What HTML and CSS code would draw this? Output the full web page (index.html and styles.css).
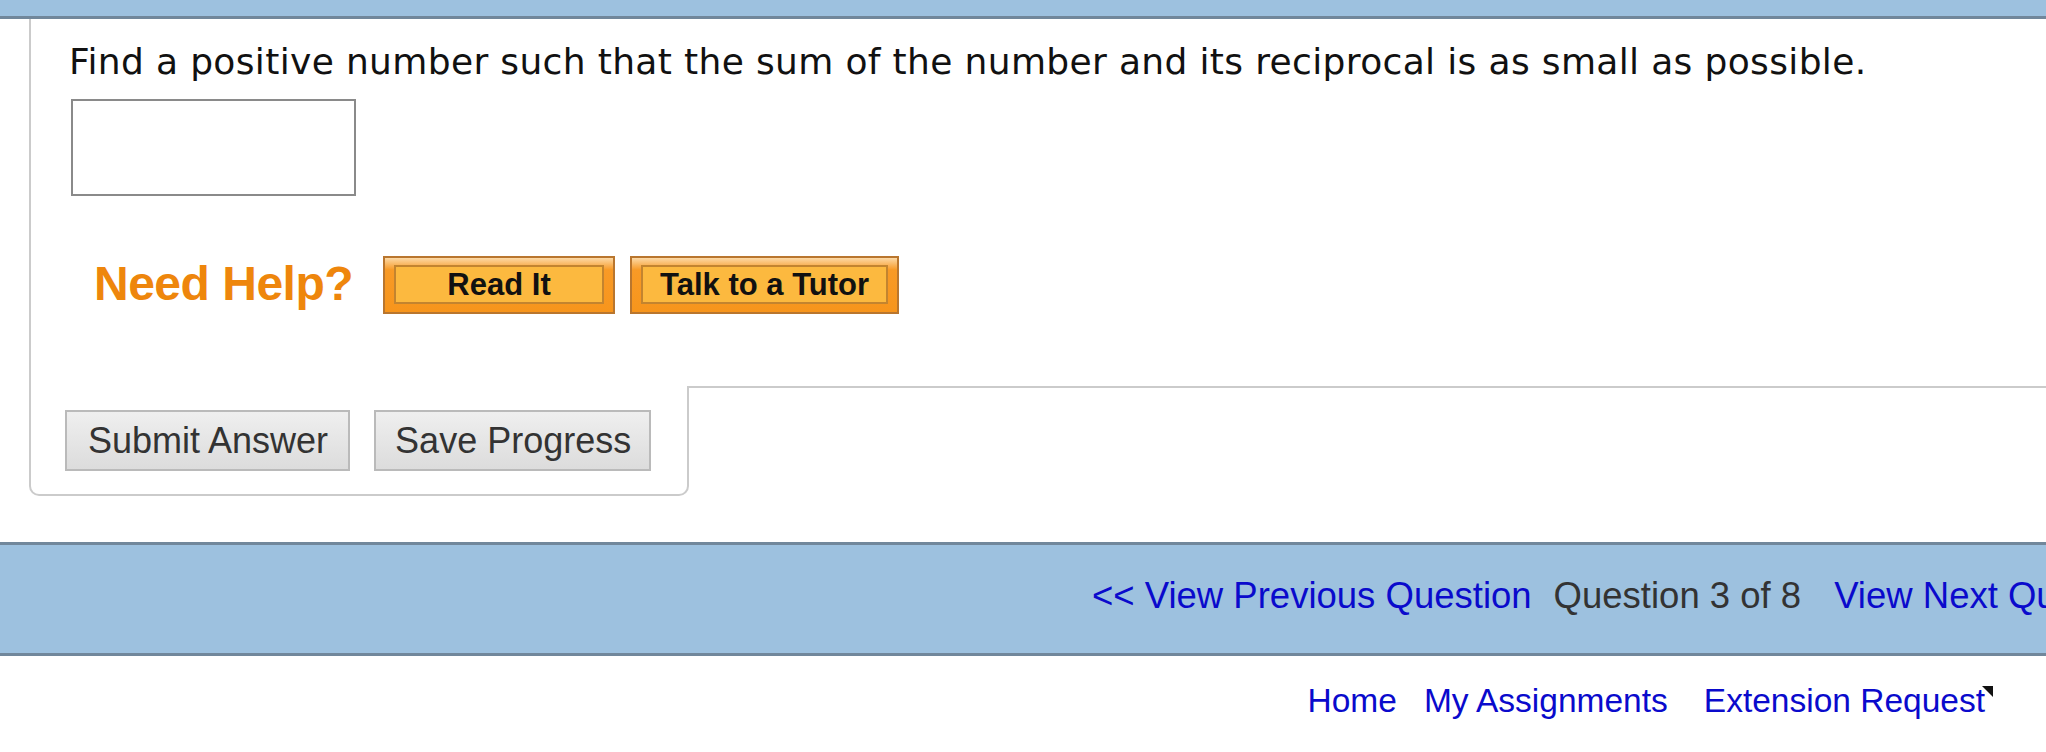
FILE: index.html
```html
<!DOCTYPE html>
<html>
<head>
<meta charset="utf-8">
<title>Question 3 of 8</title>
<link rel="stylesheet" href="styles.css">
</head>
<body>
<div class="topbar"></div>
<div class="main">
  <div class="qbox">
    <p class="qtext">Find a positive number such that the sum of the number and its reciprocal is as small as possible.</p>
    <input class="answer" type="text" aria-label="answer">
    <div class="help-row">
      <span class="need-help">Need Help?</span>
      <button class="help-btn read"><span class="help-inner">Read It</span></button>
      <button class="help-btn tutor"><span class="help-inner">Talk to a Tutor</span></button>
    </div>
  </div>
  <div class="tab">
    <button class="gray-btn">Submit Answer</button>
    <button class="gray-btn save">Save Progress</button>
  </div>
</div>
<div class="navbar">
  <div class="nav-inner">
    <a class="nav-link" href="#">&lt;&lt; View Previous Question</a>
    <span class="nav-count">Question 3 of 8</span>
    <a class="nav-link next" href="#">View Next Question &gt;&gt;</a>
  </div>
</div>
<div class="footer">
  <a class="foot-link" href="#">Home</a>
  <a class="foot-link mid" href="#">My Assignments</a>
  <a class="foot-link last" href="#">Extension Request<svg class="ext-icon" width="11" height="11" viewBox="0 0 11 11"><polygon points="0,0 11,0 11,11" fill="#111"/></svg></a>
</div>
</body>
</html>
```

FILE: styles.css
```css
html, body {
  margin: 0;
  padding: 0;
  background: #fff;
}
body {
  overflow: hidden;
  width: 2046px;
  height: 752px;
  font-family: "Liberation Sans", Arial, sans-serif;
}
.topbar {
  height: 16px;
  background: #9dc1df;
  border-bottom: 3px solid #71879b;
}
.main {
  padding-left: 29px;
}
.qbox {
  border-left: 2px solid #cbcbcb;
  border-bottom: 2px solid #cbcbcb;
  padding: 21px 0 72px 38px;
}
.qtext {
  margin: 0;
  font-family: "DejaVu Sans", Verdana, sans-serif;
  font-size: 36px;
  letter-spacing: 0.35px;
  line-height: 44px;
  color: #111;
  white-space: nowrap;
}
.answer {
  display: block;
  box-sizing: border-box;
  width: 285px;
  height: 97px;
  margin: 15px 0 0 2px;
  border: 2px solid #8a8a8a;
  background: #fff;
  padding: 0;
}
.help-row {
  display: flex;
  align-items: center;
  margin-top: 60px;
  padding-left: 25px;
}
.need-help {
  font-family: "Liberation Sans", Arial, sans-serif;
  font-weight: bold;
  font-size: 48px;
  letter-spacing: -0.5px;
  color: #ee860c;
  margin-right: 30px;
  position: relative;
  top: -2px;
}
.help-btn {
  box-sizing: border-box;
  height: 58px;
  margin: 0 15px 0 0;
  padding: 7px 9px 8px;
  border: 2px solid #b9762e;
  background: linear-gradient(#fcd9a6 0, #f89a26 22%, #f7951c 100%);
  display: flex;
  cursor: pointer;
}
.help-btn.read { width: 232px; }
.help-btn.tutor { width: 269px; }
.help-inner {
  flex: 1;
  display: flex;
  align-items: center;
  justify-content: center;
  border: 2px solid #c3842f;
  background: #fcb93f;
  font-family: "Liberation Sans", Arial, sans-serif;
  font-weight: bold;
  font-size: 31px;
  color: #111;
}
.tab {
  box-sizing: border-box;
  width: 660px;
  margin-top: -2px;
  background: #fff;
  border: 2px solid #cbcbcb;
  border-top: none;
  border-radius: 0 0 10px 10px;
  padding: 24px 0 23px 34px;
  display: flex;
  gap: 24px;
}
.gray-btn {
  box-sizing: border-box;
  height: 61px;
  padding: 0 20px 0 21px;
  border: 2px solid #bababa;
  background: linear-gradient(#efefef, #dcdcdc);
  font-family: "Liberation Sans", Arial, sans-serif;
  font-size: 36px;
  color: #333;
  cursor: pointer;
}
.gray-btn.save {
  padding: 0 18px 0 19px;
}
.navbar {
  margin-top: 46px;
  height: 108px;
  background: #9dc1df;
  border-top: 3px solid #71879b;
  border-bottom: 3px solid #71879b;
  overflow: hidden;
}
.nav-inner {
  display: flex;
  white-space: nowrap;
  padding: 30px 0 0 1092px;
  font-size: 36.5px;
  line-height: 41px;
}
.nav-link {
  color: #0a0acc;
  text-decoration: none;
}
.nav-count {
  color: #333;
  margin-left: 22px;
}
.nav-link.next {
  margin-left: 33px;
}
.footer {
  display: flex;
  justify-content: flex-end;
  padding: 26px 53px 0 0;
  font-size: 33.5px;
  line-height: 38px;
}
.foot-link {
  color: #0a0acc;
  text-decoration: none;
}
.foot-link.mid { margin-left: 27px; }
.foot-link.last { margin-left: 36px; }
.ext-icon {
  display: inline-block;
  margin-left: -3px;
  vertical-align: 15px;
}
```
